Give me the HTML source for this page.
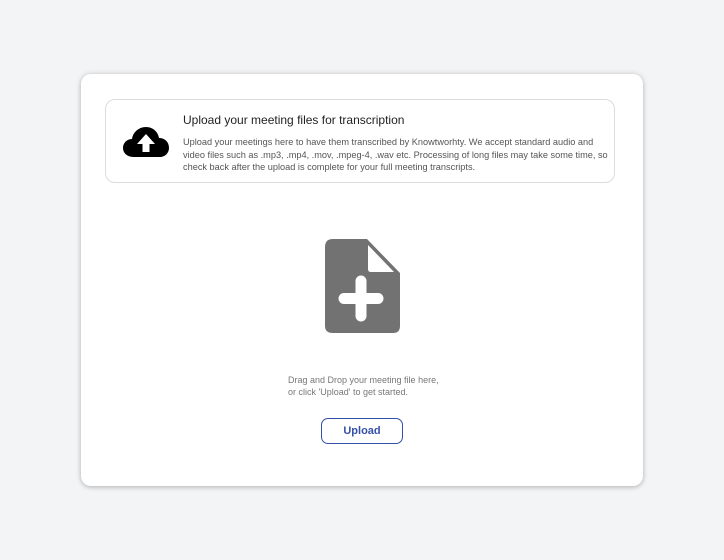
<!DOCTYPE html>
<html><head><style>
body{margin:0;width:724px;height:560px;background:#f3f4f6;font-family:"Liberation Sans",sans-serif;position:relative;overflow:hidden}
.card{position:absolute;left:81px;top:74px;width:562px;height:412px;background:#fff;border-radius:10px;box-shadow:0 0 6px rgba(0,0,0,.18),0 2px 4px rgba(0,0,0,.12)}
.info{position:absolute;left:24px;top:25px;width:508px;height:82px;border:1px solid #dcdcdc;border-radius:10px}
.title{position:absolute;left:77px;top:13px;font-size:12px;color:#222}
.body{position:absolute;left:77px;top:36px;width:430px;font-size:9.2px;line-height:12.6px;color:#555}
.drop{position:absolute;top:300px;font-size:9px;line-height:12px;color:#777}
.btn{position:absolute;left:240px;top:344px;width:80px;height:24px;border:1px solid #3550a8;border-radius:7px;color:#3550a8;font-size:11px;font-weight:bold;text-align:center;line-height:24px}
</style></head><body>
<div class="card">
 <div class="info">
  <svg style="position:absolute;left:17px;top:27px" width="47" height="31" viewBox="0 0 47 31">
   <path d="M11 30 C3 30 0 25 0 21 C0 16 4 12 9 12 C10 5 16 0 23 0 C30 0 35 5 36 11 C42 11 46 15 46 21 C46 26 42 30 37 30 Z" fill="#000"/>
   <path d="M23 7 L32 17 L26.5 17 L26.5 25 L19.5 25 L19.5 17 L14 17 Z" fill="#fff"/>
  </svg>
  <div class="title">Upload your meeting files for transcription</div>
  <div class="body">Upload your meetings here to have them transcribed by Knowtworhty. We accept standard audio and video files such as .mp3, .mp4, .mov, .mpeg-4, .wav etc. Processing of long files may take some time, so check back after the upload is complete for your full meeting transcripts.</div>
 </div>
 <svg style="position:absolute;left:244px;top:165px" width="76" height="95" viewBox="0 0 76 95">
  <path d="M8 0 L42 0 L75 34 L75 87 Q75 94 68 94 L8 94 Q0 94 0 87 L0 8 Q0 0 8 0 Z" fill="#727272"/>
  <path d="M43 6 L43 30 Q43 33 46 33 L69 33 Z" fill="#fff"/>
  <path d="M36 42 L36 77 M19 59.5 L53 59.5" stroke="#fff" stroke-width="11" stroke-linecap="round"/>
 </svg>
 <div class="drop" style="left:207px;width:200px">Drag and Drop your meeting file here,<br>or click 'Upload' to get started.</div>
 <div class="btn">Upload</div>
</div>
</body></html>
